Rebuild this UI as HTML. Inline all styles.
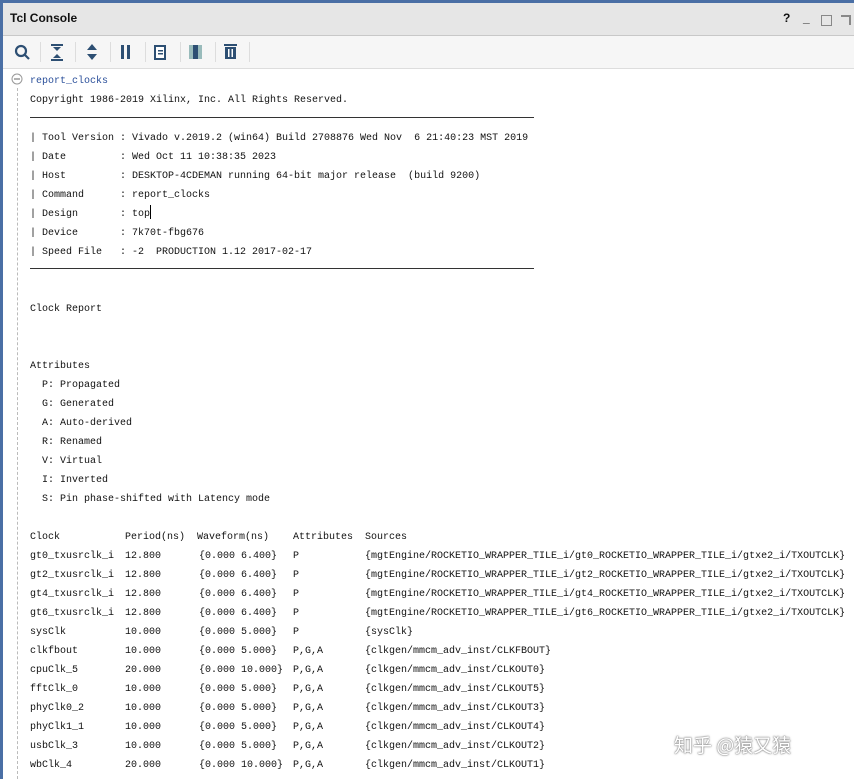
<!DOCTYPE html>
<html><head><meta charset="utf-8"><style>
body{margin:0;width:854px;height:779px;overflow:hidden;background:#fff;font-family:"Liberation Mono","Noto Sans CJK SC",monospace;position:relative}
.top{position:absolute;left:0;top:0;width:854px;height:3px;background:#4a6fa5}
.left{position:absolute;left:0;top:0;width:3px;height:779px;background:#4a6fa5}
.title{position:absolute;left:3px;top:3px;width:851px;height:32px;background:#e6e6e6;border-bottom:1px solid #c8c8c8}
.title span{position:absolute;left:7px;top:8px;font:bold 12px "Liberation Sans",sans-serif;color:#111}
.ctl{position:absolute;top:10px;font:bold 13px "Liberation Sans",sans-serif;color:#888}
.tb{position:absolute;left:3px;top:36px;width:851px;height:32px;background:#f6f6f6;border-bottom:1px solid #ddd}
.sep{position:absolute;top:6px;width:1px;height:20px;background:#ddd}
.l{position:absolute;font-size:10px;line-height:19px;white-space:pre;color:#111}
.hr{position:absolute;left:30px;width:504px;height:1px;background:#333}
.dash{position:absolute;left:17px;top:88px;height:691px;border-left:1px dashed #bbb}
.wm{position:absolute;left:674px;top:731px;font:19px "Noto Sans CJK SC",sans-serif;color:#fff;text-shadow:0 0 2px #777,0 0 1px #555}
</style></head><body>
<div class="top"></div><div class="left"></div>
<div class="title"><span>Tcl Console</span>
<span class="ctl" style="left:780px;position:absolute">?</span>
<span class="ctl" style="left:800px;position:absolute">_</span>
<div style="position:absolute;left:818px;top:12px;width:9px;height:9px;border:1px solid #888"></div>
<div style="position:absolute;left:838px;top:12px;width:8px;height:8px;border-top:2px solid #888;border-right:2px solid #888"></div>
</div>
<div class="tb">
<svg width="851" height="32" style="position:absolute;left:0;top:0">
<g fill="none" stroke="#2d4f73" stroke-width="2.2"><circle cx="18" cy="15" r="5"/><path d="M22 19l4 4"/></g>
<g fill="#2d4f73"><path d="M48 8h12v2H48zM48 23h12v2H48zM50 11h8l-4 4zM50 22h8l-4-4z"/>
<path d="M84 14l5-6 5 6zM84 18l5 6 5-6z"/>
<rect x="118" y="9" width="3" height="14"/><rect x="124" y="9" width="3" height="14"/>
<rect x="152" y="10" width="10" height="13" fill="#fff" stroke="#2d4f73" stroke-width="2"/><rect x="155" y="14" width="5" height="1.5"/><rect x="155" y="17" width="5" height="1.5"/>
<rect x="186" y="9" width="13" height="14" fill="#9bb"/><rect x="190" y="9" width="5" height="14"/>
<rect x="222" y="11" width="11" height="12"/><rect x="221" y="8" width="13" height="2"/></g>
<g fill="#fff"><rect x="225" y="13" width="1.5" height="8"/><rect x="228.5" y="13" width="1.5" height="8"/></g>
</svg>
<div class="sep" style="left:37px"></div><div class="sep" style="left:72px"></div><div class="sep" style="left:107px"></div><div class="sep" style="left:142px"></div><div class="sep" style="left:177px"></div><div class="sep" style="left:212px"></div><div class="sep" style="left:246px"></div>
</div>
<div class="dash"></div>
<svg style="position:absolute;left:11px;top:73px" width="12" height="12"><circle cx="6" cy="6" r="5" fill="#fff" stroke="#999"/><path d="M3 6h6" stroke="#666"/></svg>
<div class="l" style="left:30px;top:72px;color:#2a4f9a">report_clocks</div>
<div class="l" style="left:30px;top:91px">Copyright 1986-2019 Xilinx, Inc. All Rights Reserved.</div>
<div class="hr" style="top:117px"></div>
<div class="l" style="left:30px;top:129px">| Tool Version : Vivado v.2019.2 (win64) Build 2708876 Wed Nov  6 21:40:23 MST 2019
| Date         : Wed Oct 11 10:38:35 2023
| Host         : DESKTOP-4CDEMAN running 64-bit major release  (build 9200)
| Command      : report_clocks
| Design       : top
| Device       : 7k70t-fbg676
| Speed File   : -2  PRODUCTION 1.12 2017-02-17</div>
<div style="position:absolute;left:150px;top:205px;width:1px;height:14px;background:#000"></div>
<div class="hr" style="top:268px"></div>
<div class="l" style="left:30px;top:300px">Clock Report</div>
<div class="l" style="left:30px;top:357px">Attributes
  P: Propagated
  G: Generated
  A: Auto-derived
  R: Renamed
  V: Virtual
  I: Inverted
  S: Pin phase-shifted with Latency mode</div>
<div class="l" style="left:30px;top:528px">Clock
gt0_txusrclk_i
gt2_txusrclk_i
gt4_txusrclk_i
gt6_txusrclk_i
sysClk
clkfbout
cpuClk_5
fftClk_0
phyClk0_2
phyClk1_1
usbClk_3
wbClk_4</div>
<div class="l" style="left:125px;top:528px">Period(ns)
12.800
12.800
12.800
12.800
10.000
10.000
20.000
10.000
10.000
10.000
10.000
20.000</div>
<div class="l" style="left:197px;top:528px">Waveform(ns)</div>
<div class="l" style="left:199px;top:547px">{0.000 6.400}
{0.000 6.400}
{0.000 6.400}
{0.000 6.400}
{0.000 5.000}
{0.000 5.000}
{0.000 10.000}
{0.000 5.000}
{0.000 5.000}
{0.000 5.000}
{0.000 5.000}
{0.000 10.000}</div>
<div class="l" style="left:293px;top:528px">Attributes
P
P
P
P
P
P,G,A
P,G,A
P,G,A
P,G,A
P,G,A
P,G,A
P,G,A</div>
<div class="l" style="left:365px;top:528px">Sources
{mgtEngine/ROCKETIO_WRAPPER_TILE_i/gt0_ROCKETIO_WRAPPER_TILE_i/gtxe2_i/TXOUTCLK}
{mgtEngine/ROCKETIO_WRAPPER_TILE_i/gt2_ROCKETIO_WRAPPER_TILE_i/gtxe2_i/TXOUTCLK}
{mgtEngine/ROCKETIO_WRAPPER_TILE_i/gt4_ROCKETIO_WRAPPER_TILE_i/gtxe2_i/TXOUTCLK}
{mgtEngine/ROCKETIO_WRAPPER_TILE_i/gt6_ROCKETIO_WRAPPER_TILE_i/gtxe2_i/TXOUTCLK}
{sysClk}
{clkgen/mmcm_adv_inst/CLKFBOUT}
{clkgen/mmcm_adv_inst/CLKOUT0}
{clkgen/mmcm_adv_inst/CLKOUT5}
{clkgen/mmcm_adv_inst/CLKOUT3}
{clkgen/mmcm_adv_inst/CLKOUT4}
{clkgen/mmcm_adv_inst/CLKOUT2}
{clkgen/mmcm_adv_inst/CLKOUT1}</div>
<div class="wm">知乎 @猿又猿</div>
</body></html>
